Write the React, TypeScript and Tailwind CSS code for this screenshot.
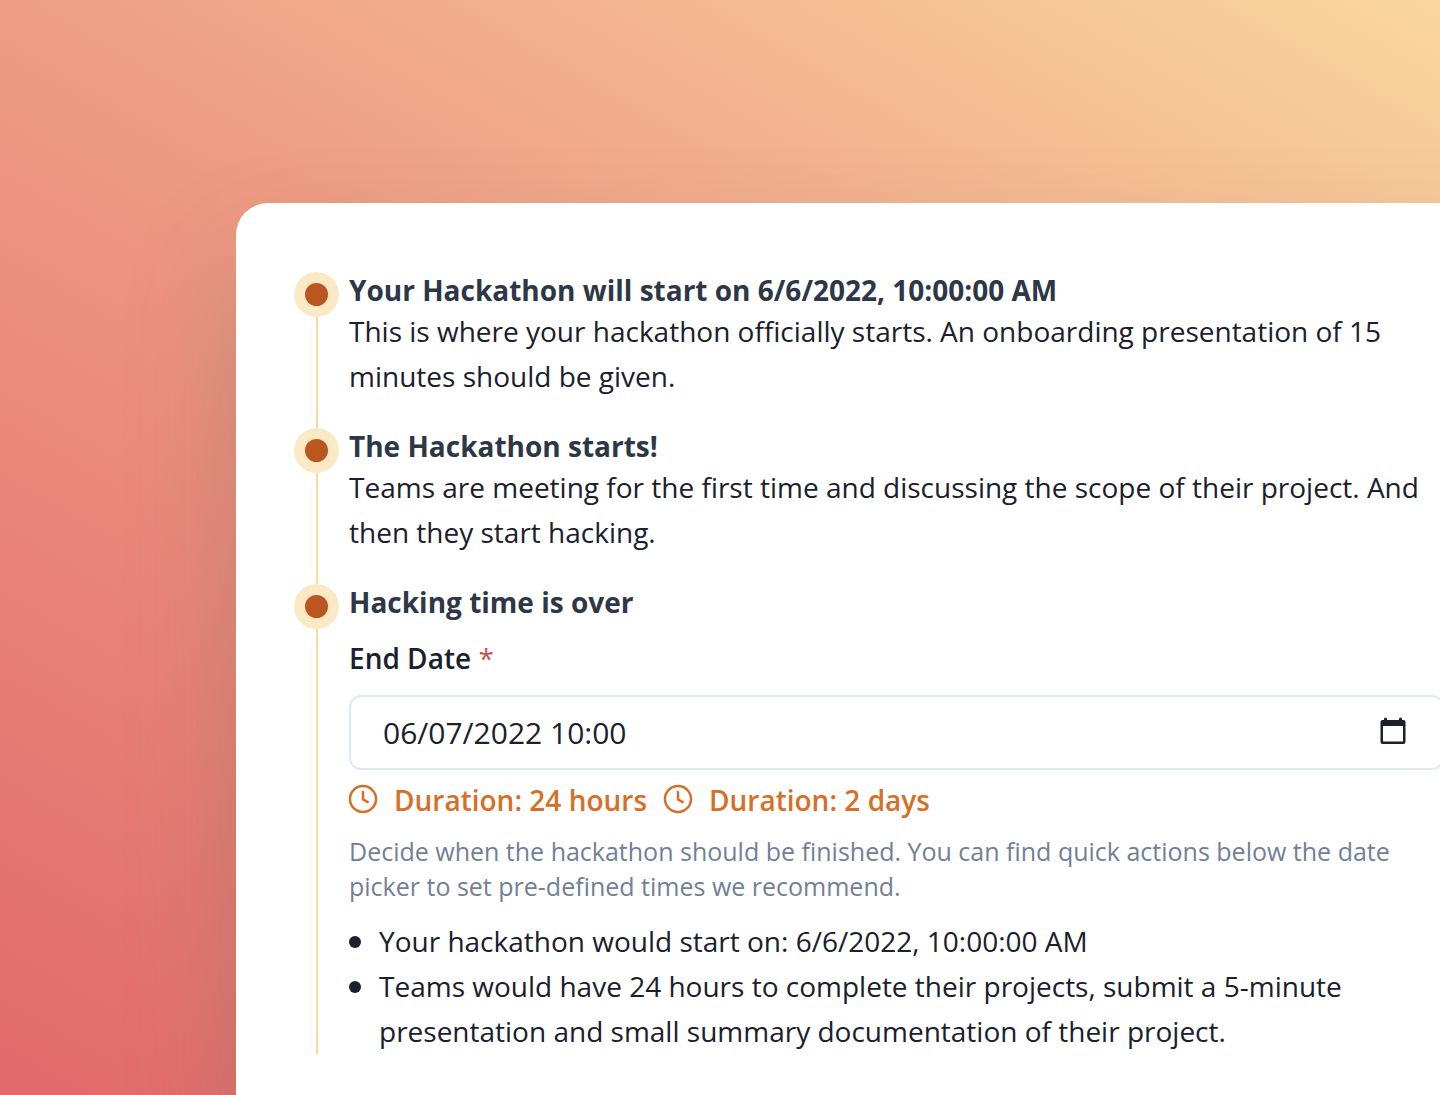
import { useState, type ReactNode } from 'react';

const START = '6/6/2022, 10:00:00 AM';

function ClockIcon() {
  return (
    <svg viewBox="0 0 24 24" className="w-[34px] h-[34px] -ml-[3px] mr-[14px] -mt-1" fill="none" stroke="currentColor" strokeWidth="1.75" strokeLinecap="round" strokeLinejoin="round" aria-hidden="true">
      <circle cx="12" cy="12" r="9.2" />
      <path d="M12 7v5.300l3.300 1.900" />
    </svg>
  );
}

function CalendarIcon() {
  return (
    <svg viewBox="0 0 26 28" className="w-[26px] h-[28px]" aria-hidden="true">
      <path fill="#1a202c" fillRule="evenodd" d="M4 2a1.500 1.500 0 0 1 3 0V3h12V2a1.500 1.500 0 0 1 3 0V3h1.400A2 2 0 0 1 25.500 5v20a2 2 0 0 1-2 2h-21a2 2 0 0 1-2-2V5a2 2 0 0 1 2-2H4zM3 9v15.500h20V9z" />
    </svg>
  );
}

function TimelineItem({ title, last, children }: { title: string; last?: boolean; children: ReactNode }) {
  return (
    <li className="flex">
      <div className="flex flex-col items-center w-[45px] mr-[10px] shrink-0">
        <div className="w-[45px] h-[45px] rounded-full bg-[#fbe8c4] flex items-center justify-center">
          <div className="w-[23px] h-[23px] rounded-full bg-[#bc5621]" />
        </div>
        <div className="w-[2px] grow bg-[#f8d9a0]" />
      </div>
      <div className={`min-w-0 grow ${last ? '' : 'pb-[29px]'}`}>
        <h2 className="font-bold leading-[37px] text-[#2d3748]">{title}</h2>
        {children}
      </div>
    </li>
  );
}

export default function App() {
  const [endDate, setEndDate] = useState('06/07/2022 10:00');

  return (
    <div className="min-h-screen flex overflow-hidden pt-[203px] pl-[236px] bg-linear-[30deg] from-[#e2686b] via-[#ee9c83] via-56% to-[#fad69f] font-['Open_Sans',sans-serif] text-[28px] leading-[45px] text-[#1a202c]">
      <main className="grow min-w-0 -mr-16 pt-[69px] pl-[58px] pr-[60px] pb-11 bg-white rounded-tl-[32px] shadow-[0_60px_110px_rgba(90,110,80,0.25)]">
        <ol>
          <TimelineItem title={`Your Hackathon will start on ${START}`}>
            <p>This is where your hackathon officially starts. An onboarding presentation of 15 minutes should be given.</p>
          </TimelineItem>
          <TimelineItem title="The Hackathon starts!">
            <p>Teams are meeting for the first time and discussing the scope of their project. And then they start hacking.</p>
          </TimelineItem>
          <TimelineItem title="Hacking time is over" last>
            <label htmlFor="end-date" className="block font-semibold pt-[15px] pb-[14px]">
              End Date <span className="font-normal text-[#c9564a]">*</span>
            </label>
            <div className="flex items-center h-[75px] pl-8 pr-[36px] border-2 border-[#e0e8f3] rounded-xl">
              <input
                id="end-date"
                type="text"
                value={endDate}
                onChange={e => setEndDate(e.target.value)}
                className="grow min-w-0 bg-transparent outline-none text-3xl"
              />
              <button type="button" aria-label="Open calendar" className="-mt-1">
                <CalendarIcon />
              </button>
            </div>
            <div className="flex gap-[17px] pt-2 font-semibold text-[#d66f28]">
              <button type="button" onClick={() => setEndDate('06/07/2022 10:00')} className="flex items-center">
                <ClockIcon />Duration: 24 hours
              </button>
              <button type="button" onClick={() => setEndDate('06/08/2022 10:00')} className="flex items-center">
                <ClockIcon />Duration: 2 days
              </button>
            </div>
            <p className="pt-[11px] text-[25px] leading-[35px] text-[#718096]">
              Decide when the hackathon should be finished. You can find quick actions below the date picker to set pre-defined times we recommend.
            </p>
            <ul className="pt-[15px]">
              {[
                `Your hackathon would start on: ${START}`,
                'Teams would have 24 hours to complete their projects, submit a 5-minute presentation and small summary documentation of their project.',
              ].map(text => (
                <li key={text} className="flex">
                  <span className="w-3 h-3 mt-[17px] mr-[18px] shrink-0 rounded-full bg-[#1a202c]" />
                  <span>{text}</span>
                </li>
              ))}
            </ul>
          </TimelineItem>
        </ol>
      </main>
    </div>
  );
}
